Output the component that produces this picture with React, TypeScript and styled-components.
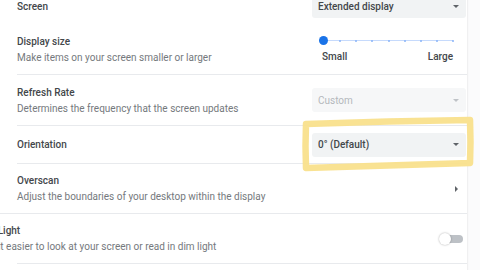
import React from "react";
import styled, { createGlobalStyle } from "styled-components";

const GlobalStyle = createGlobalStyle`
  html, body { margin: 0; padding: 0; }
  body {
    width: 480px;
    height: 270px;
    overflow: hidden;
    background: #fbfbfc;
    font-family: Roboto, "Noto Sans", "Liberation Sans", sans-serif;
    -webkit-font-smoothing: antialiased;
  }
`;

const Page = styled.div`
  position: relative;
  width: 480px;
  height: 270px;
  overflow: hidden;
`;

const Card = styled.div`
  width: 467px;
  margin-top: -12px;
  background: #ffffff;
  box-shadow: 1px 0 1px rgba(60, 64, 67, 0.06);
`;

const Row = styled.div<{ $h: number }>`
  display: flex;
  align-items: center;
  justify-content: space-between;
  height: ${(p) => p.$h}px;
  padding-left: 17px;
  padding-right: 1px;
`;

const Divider = styled.div<{ $inset?: number }>`
  height: 1px;
  margin-left: ${(p) => p.$inset ?? 17}px;
  background: #e8eaed;
`;

const TextCol = styled.div<{ $shift?: number }>`
  display: flex;
  flex-direction: column;
  gap: 3px;
  white-space: nowrap;
  margin-left: ${(p) => p.$shift ?? 0}px;
`;

const Label = styled.div`
  font-size: 10px;
  line-height: 13px;
  font-weight: 500;
  color: #43474b;
`;

const Sub = styled.div`
  font-size: 10px;
  line-height: 13px;
  color: #75797d;
`;

const Control = styled.div<{ $align?: string; $pr?: number }>`
  width: 154px;
  display: flex;
  justify-content: ${(p) => p.$align ?? "flex-start"};
  padding-right: ${(p) => p.$pr ?? 0}px;
  box-sizing: border-box;
`;

const Select = styled.div<{ $disabled?: boolean }>`
  width: 154px;
  height: 24px;
  box-sizing: border-box;
  display: flex;
  align-items: center;
  justify-content: space-between;
  padding: 0 7px 0 6px;
  border-radius: 3px;
  background: ${(p) => (p.$disabled ? "#f6f7f8" : "#f1f3f4")};
  color: ${(p) => (p.$disabled ? "#b4b8bc" : "#43474b")};
  font-size: 10px;
  font-weight: ${(p) => (p.$disabled ? 400 : 500)};
`;

const Caret = styled.span<{ $disabled?: boolean }>`
  width: 0;
  height: 0;
  border-left: 3.5px solid transparent;
  border-right: 3.5px solid transparent;
  border-top: 3.5px solid ${(p) => (p.$disabled ? "#bfc3c7" : "#5f6368")};
`;

const SideArrow = styled.span`
  width: 0;
  height: 0;
  border-top: 3.5px solid transparent;
  border-bottom: 3.5px solid transparent;
  border-left: 3.5px solid #5f6368;
`;

const SliderWrap = styled.div`
  width: 154px;
  padding: 0 13px 0 11px;
  box-sizing: border-box;
  display: flex;
  flex-direction: column;
  gap: 6px;
`;

const Track = styled.div`
  position: relative;
  height: 9px;
  display: flex;
  align-items: center;
  justify-content: space-between;
  &::before {
    content: "";
    position: absolute;
    left: 0;
    right: 0;
    top: 4px;
    height: 1px;
    background: #c6dafc;
  }
`;

const Tick = styled.span<{ $knob?: boolean }>`
  position: relative;
  width: ${(p) => (p.$knob ? 9 : 2)}px;
  height: ${(p) => (p.$knob ? 9 : 2)}px;
  margin: ${(p) => (p.$knob ? "0 -3.5px 0 -4.5px" : "0 -1px")};
  border-radius: 50%;
  background: ${(p) => (p.$knob ? "#1a73e8" : "#8ab4f8")};
`;

const SliderLabels = styled.div`
  display: flex;
  justify-content: space-between;
  font-size: 10px;
  font-weight: 500;
  color: #43474b;
  margin-left: -1px;
`;

const Toggle = styled.div`
  position: relative;
  width: 24px;
  height: 12px;
  display: flex;
  align-items: center;
`;

const ToggleTrack = styled.div`
  margin-left: 6px;
  width: 18px;
  height: 8px;
  border-radius: 4px;
  background: #bdc1c6;
`;

const ToggleKnob = styled.div`
  position: absolute;
  left: 0;
  top: 0;
  width: 12px;
  height: 12px;
  border-radius: 50%;
  background: #ffffff;
  box-shadow: 0 0 2px rgba(0, 0, 0, 0.35);
`;

const Highlight = styled.svg`
  position: absolute;
  left: 0;
  top: 0;
  pointer-events: none;
`;

export default function App() {
  return (
    <Page>
      <GlobalStyle />
      <Card>
        <Row $h={36}>
          <TextCol>
            <Label>Screen</Label>
          </TextCol>
          <Control>
            <Select>
              <span>Extended display</span>
              <Caret />
            </Select>
          </Control>
        </Row>
        <Row $h={50}>
          <TextCol>
            <Label>Display size</Label>
            <Sub>Make items on your screen smaller or larger</Sub>
          </TextCol>
          <Control>
            <SliderWrap>
              <Track>
                <Tick $knob />
                {Array.from({ length: 8 }).map((_, i) => (
                  <Tick key={i} />
                ))}
              </Track>
              <SliderLabels>
                <span>Small</span>
                <span>Large</span>
              </SliderLabels>
            </SliderWrap>
          </Control>
        </Row>
        <Divider />
        <Row $h={50}>
          <TextCol>
            <Label>Refresh Rate</Label>
            <Sub>Determines the frequency that the screen updates</Sub>
          </TextCol>
          <Control>
            <Select $disabled>
              <span>Custom</span>
              <Caret $disabled />
            </Select>
          </Control>
        </Row>
        <Divider />
        <Row $h={37}>
          <TextCol>
            <Label>Orientation</Label>
          </TextCol>
          <Control>
            <Select>
              <span>0° (Default)</span>
              <Caret />
            </Select>
          </Control>
        </Row>
        <Divider />
        <Row $h={49}>
          <TextCol>
            <Label>Overscan</Label>
            <Sub>Adjust the boundaries of your desktop within the display</Sub>
          </TextCol>
          <Control $align="flex-end" $pr={8}>
            <SideArrow />
          </Control>
        </Row>
        <Divider $inset={0} />
        <Row $h={49}>
          <TextCol $shift={-46}>
            <Label>Night Light</Label>
            <Sub>Make it easier to look at your screen or read in dim light</Sub>
          </TextCol>
          <Control $align="flex-end" $pr={3}>
            <Toggle>
              <ToggleTrack />
              <ToggleKnob />
            </Toggle>
          </Control>
        </Row>
        <Divider />
        <Row $h={40} />
      </Card>
      <Highlight width="480" height="270" viewBox="0 0 480 270">
        <path
          d="M306 124 L388 121.5 L470 120 L470.5 142 L470 163 L388 165.5 L306 168 L305.5 146 Z"
          fill="none"
          stroke="#f9e08c"
          strokeWidth="6.5"
          strokeLinejoin="round"
          strokeLinecap="round"
          opacity="0.95"
        />
      </Highlight>
    </Page>
  );
}
